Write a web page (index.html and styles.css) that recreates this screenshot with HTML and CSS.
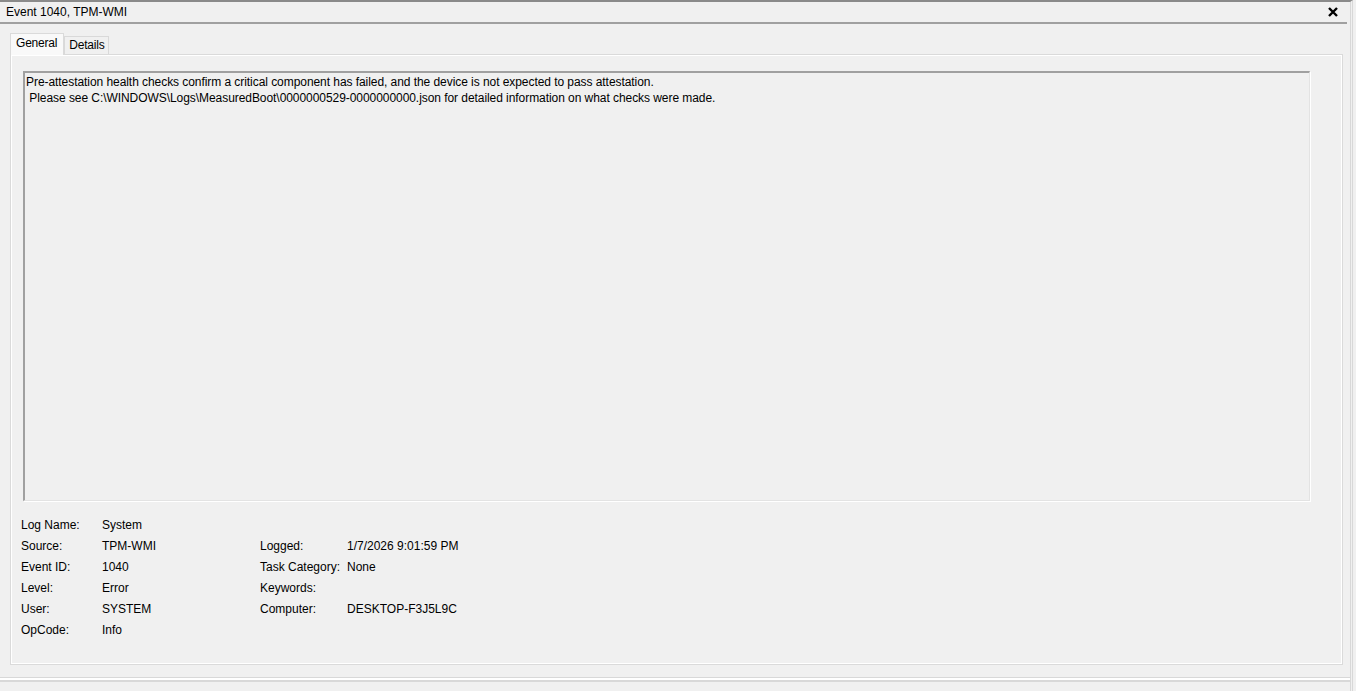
FILE: index.html
```html
<!DOCTYPE html>
<html>
<head>
<meta charset="utf-8">
<link rel="stylesheet" href="styles.css">
</head>
<body>
<div class="window">
  <div class="titlebar">
    <span class="title">Event 1040, TPM-WMI</span>
    <span class="close">
      <svg width="10" height="10" viewBox="0 0 10 10"><path d="M1 1 L9 9 M9 1 L1 9" stroke="#000" stroke-width="2.4" fill="none"/></svg>
    </span>
  </div>
  <div class="tabs">
    <div class="tab active">General</div>
    <div class="tab">Details</div>
  </div>
  <div class="panel">
    <div class="message">
      <div class="line">Pre-attestation health checks confirm a critical component has failed, and the device is not expected to pass attestation.</div>
      <div class="line"> Please see C:\WINDOWS\Logs\MeasuredBoot\0000000529-0000000000.json for detailed information on what checks were made.</div>
    </div>
    <div class="props">
      <div class="lbl">Log Name:</div><div class="val">System</div><div class="lbl2"></div><div class="val2"></div>
      <div class="lbl">Source:</div><div class="val">TPM-WMI</div><div class="lbl2">Logged:</div><div class="val2">1/7/2026 9:01:59 PM</div>
      <div class="lbl">Event ID:</div><div class="val">1040</div><div class="lbl2">Task Category:</div><div class="val2">None</div>
      <div class="lbl">Level:</div><div class="val">Error</div><div class="lbl2">Keywords:</div><div class="val2"></div>
      <div class="lbl">User:</div><div class="val">SYSTEM</div><div class="lbl2">Computer:</div><div class="val2">DESKTOP-F3J5L9C</div>
      <div class="lbl">OpCode:</div><div class="val">Info</div><div class="lbl2"></div><div class="val2"></div>
    </div>
  </div>
  <div class="bottom"></div>
</div>
</body>
</html>
```
FILE: styles.css
```css
html, body {
  margin: 0;
  padding: 0;
  background: #f0f0f0;
}
body {
  font-family: "Liberation Sans", Arial, sans-serif;
  font-size: 12px;
  color: #000;
  width: 1356px;
  height: 691px;
  overflow: hidden;
}
.window {
  width: 1353px;
  height: 691px;
  border-top: 2px solid #8a8a8a;
  border-right: 3px double #d8d8d8;
  box-sizing: border-box;
  display: flex;
  flex-direction: column;
}
.titlebar {
  height: 20px;
  margin: 0 3px 0 0;
  padding: 0 0 0 6px;
  border-bottom: 2px solid #a0a0a0;
  display: flex;
  align-items: center;
  justify-content: space-between;
}
.title {
  line-height: 20px;
}
.close {
  display: flex;
  align-items: center;
  padding-right: 9px;
}
.tabs {
  display: flex;
  align-items: flex-end;
  margin: 8px 0 0 10px;
  height: 22px;
}
.tab {
  height: 18px;
  line-height: 17px;
  padding: 0 3px 0 4px;
  border: 1px solid #d9d9d9;
  border-bottom: none;
  background: #f0f0f0;
  box-sizing: border-box;
  letter-spacing: -0.2px;
}
.tab.active {
  height: 22px;
  line-height: 18px;
  padding: 0 6px 0 5px;
  background: #f9f9f9;
  border-color: #dadada;
  position: relative;
  z-index: 1;
  margin-bottom: -1px;
}
.panel {
  margin: 0 7px 0 10px;
  height: 611px;
  border: 1px solid #dadada;
  box-shadow: inset 1px 1px 0 #ffffff, inset -1px -1px 0 #ffffff;
  box-sizing: border-box;
  display: flex;
  flex-direction: column;
  padding: 16px 0 0 11px;
}
.message {
  width: 1287px;
  height: 430px;
  box-sizing: border-box;
  border-top: 2px solid #a0a0a0;
  border-left: 2px solid #a0a0a0;
  border-right: 1px solid #e3e3e3;
  border-bottom: 1px solid #e3e3e3;
  box-shadow: 1px 1px 0 #ffffff;
  padding: 1px 0 0 1px;
  margin-left: 1px;
  letter-spacing: -0.06px;
}
.line {
  line-height: 16px;
  white-space: pre;
}
.props {
  display: grid;
  grid-template-columns: 81px 158px 87px auto;
  grid-auto-rows: 21px;
  margin-top: 16px;
  margin-left: -1px;
}
.props div {
  line-height: 17px;
}
.bottom {
  margin-top: 12px;
  border-top: 1px solid #d8d8d8;
  border-bottom: 2px solid #d8d8d8;
  height: 2px;
  background: #ffffff;
}
```
